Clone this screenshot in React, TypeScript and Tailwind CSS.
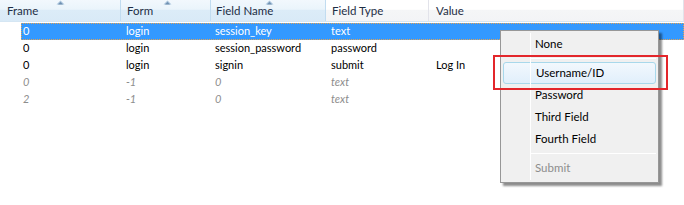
import React from 'react'

const cols = [
  { label: 'Frame', w: 121, sorted: true, arrow: 60, pad: 'pl-[7px]' },
  { label: 'Form', w: 90, sorted: true, arrow: 46, pad: 'pl-[6px]' },
  { label: 'Field Name', w: 115, sorted: true, arrow: 58, pad: 'pl-[5px]' },
  { label: 'Field Type', w: 103, sorted: false, arrow: 0, pad: 'pl-[6px]' },
  { label: 'Value', w: 255, sorted: false, arrow: 0, pad: 'pl-[7px]' },
]

const rows = [
  { f: '0', form: 'login', name: 'session_key', type: 'text', value: '', sel: true, dim: false },
  { f: '0', form: 'login', name: 'session_password', type: 'password', value: '', sel: false, dim: false },
  { f: '0', form: 'login', name: 'signin', type: 'submit', value: 'Log In', sel: false, dim: false },
  { f: '0', form: '-1', name: '0', type: 'text', value: '', sel: false, dim: true },
  { f: '2', form: '-1', name: '0', type: 'text', value: '', sel: false, dim: true },
]

function SortArrow() {
  return (
    <svg width="9" height="5" viewBox="0 0 9 5" className="absolute top-0">
      <path d="M0.5 4.5 L4.5 0.5 L8.5 4.5 Z" fill="#a9c3db" />
      <path d="M2 4.5 L4.5 2 L7 4.5 Z" fill="#6d8fb0" />
    </svg>
  )
}

export default function App() {
  return (
    <div className="relative w-[684px] h-[205px] bg-white overflow-hidden text-[11px] text-black" style={{ fontFamily: 'Lato, "Noto Sans", sans-serif' }}>
      <div className="flex h-[22px] border-b border-[#d5e6f3] text-[11.5px]">
        {cols.map((c) => (
          <div
            key={c.label}
            style={{ width: c.w }}
            className={`relative shrink-0 flex items-center ${c.pad} border-r ${c.sorted ? 'border-[#c1dcf0] bg-[linear-gradient(#f2f8fd_0%,#eaf4fb_45%,#dcecf8_46%,#d9eaf7_100%)]' : 'border-[#e2e3ea] bg-[linear-gradient(#ffffff_0%,#ffffff_45%,#f5f6f7_46%,#f3f4f6_100%)]'}`}
          >
            {c.sorted && (
              <span className="absolute top-0" style={{ left: c.arrow - 4 }}>
                <SortArrow />
              </span>
            )}
            <span className="text-[#1e2e45] leading-none pt-[1px]">{c.label}</span>
          </div>
        ))}
      </div>
      <div className="pt-px">
        {rows.map((r, i) => (
          <div key={i} className={`flex h-[17px] items-center ${r.dim ? 'italic text-[#8d8d8d]' : ''}`}>
            <div className={`flex h-full items-center ml-[21px] ${r.sel ? 'bg-[#3399ff] text-white outline-1 outline-dotted outline-[#e2a254] -outline-offset-1 w-[663px]' : ''}`}>
              <span className="w-[105px] pl-[2px]">{r.f}</span>
              <span className="w-[89px]">{r.form}</span>
              <span className="w-[116px]">{r.name}</span>
              <span className="w-[105px]">{r.type}</span>
              <span>{r.value}</span>
            </div>
          </div>
        ))}
      </div>

      {/* context menu */}
      <div className="absolute left-[500px] top-[30px] w-[159px] h-[153px] bg-[#f0f0f0] border border-[#979797] shadow-[3px_3px_2px_rgba(0,0,0,0.45)] py-[2px] text-[11.5px]">
        <div className="absolute left-[29px] top-[2px] bottom-[2px] w-px bg-[#e2e3e3] border-r border-white" />
        <div className="h-[22px] flex items-center pl-[34px]">None</div>
        <div className="ml-[30px] mr-[2px] my-[3px] h-px bg-[#e0e0e0] border-b border-white" />
        <div className="mx-[2px] h-[22px] flex items-center pl-[32px] rounded-[3px] border border-[#a8d8eb] bg-[linear-gradient(#f2f8fd,#e1effb)]">Username/ID</div>
        <div className="h-[22px] flex items-center pl-[34px]">Password</div>
        <div className="h-[22px] flex items-center pl-[34px]">Third Field</div>
        <div className="h-[22px] flex items-center pl-[34px]">Fourth Field</div>
        <div className="ml-[30px] mr-[2px] my-[3px] h-px bg-[#e0e0e0] border-b border-white" />
        <div className="h-[22px] flex items-center pl-[34px] text-[#8d8d8d]">Submit</div>
      </div>

      <div className="absolute left-[493px] top-[55px] w-[175px] h-[35px] border border-solid border-[#e3262b] text-[#e3262b] shadow-[inset_0_0_0_1px_#e3262b]" />
    </div>
  )
}
